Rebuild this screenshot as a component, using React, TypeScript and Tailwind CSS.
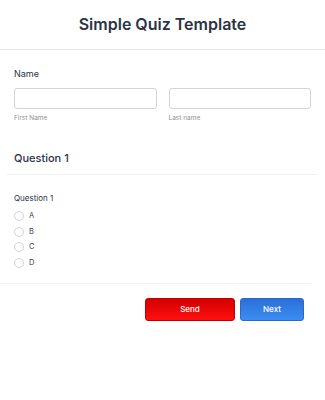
import React from "react";

const font = { fontFamily: "Inter, 'Noto Sans', sans-serif" };

export default function App() {
  const options = ["A", "B", "C", "D"];

  return (
    <div className="w-[325px] h-[400px] bg-white text-[#2c3345]" style={font}>
      <div className="h-[50px] flex items-center justify-center border-b border-[#e6e8ec]">
        <h1 className="text-[16px] font-semibold leading-none pb-[1px]">
          Simple Quiz Template
        </h1>
      </div>

      <div className="px-[14px] pt-[18px]">
        <label className="block text-[9px] leading-[11px] text-[#2c3345]">Name</label>
        <div className="mt-[7px] grid grid-cols-2 gap-[12px]">
          <div>
            <input className="w-full h-[21px] rounded-[3px] border border-[#cfd4de] outline-none" />
            <p className="mt-[4px] text-[6.5px] leading-[8px] text-[#8d919c]">First Name</p>
          </div>
          <div>
            <input className="w-full h-[21px] rounded-[3px] border border-[#cfd4de] outline-none" />
            <p className="mt-[4px] text-[6.5px] leading-[8px] text-[#8d919c]">Last name</p>
          </div>
        </div>
      </div>

      <div className="px-[7px] pt-[29px]">
        <h2 className="px-[7px] text-[11px] font-medium leading-[14px] pb-[9px] border-b border-[#eef0f3]">
          Question 1
        </h2>
      </div>

      <div className="px-[14px] pt-[18px]">
        <p className="text-[8px] leading-[10px]">Question 1</p>
        <div className="mt-[8px] flex flex-col gap-[5.5px]">
          {options.map((o) => (
            <div key={o} className="flex items-center gap-[5px]">
              <span className="w-[10px] h-[10px] rounded-full border border-[#cfd4de] bg-white" />
              <span className="text-[7.5px] leading-[10px] text-[#3a3f52]">{o}</span>
            </div>
          ))}
        </div>
      </div>

      <div className="mt-[15px] w-[312px] border-b border-[#eef0f3]" />

      <div className="flex justify-end gap-[5px] pr-[21px] pt-[14px]">
        <button className="w-[90px] h-[23px] rounded-[3px] bg-gradient-to-b from-[#d40000] to-[#ff1010] border border-[#c00000] text-white text-[8px] font-medium">
          Send
        </button>
        <button className="w-[64px] h-[23px] rounded-[3px] bg-gradient-to-b from-[#2b6fd8] to-[#3c8ef2] border border-[#2a68cc] text-white text-[8px] font-medium">
          Next
        </button>
      </div>
    </div>
  );
}
